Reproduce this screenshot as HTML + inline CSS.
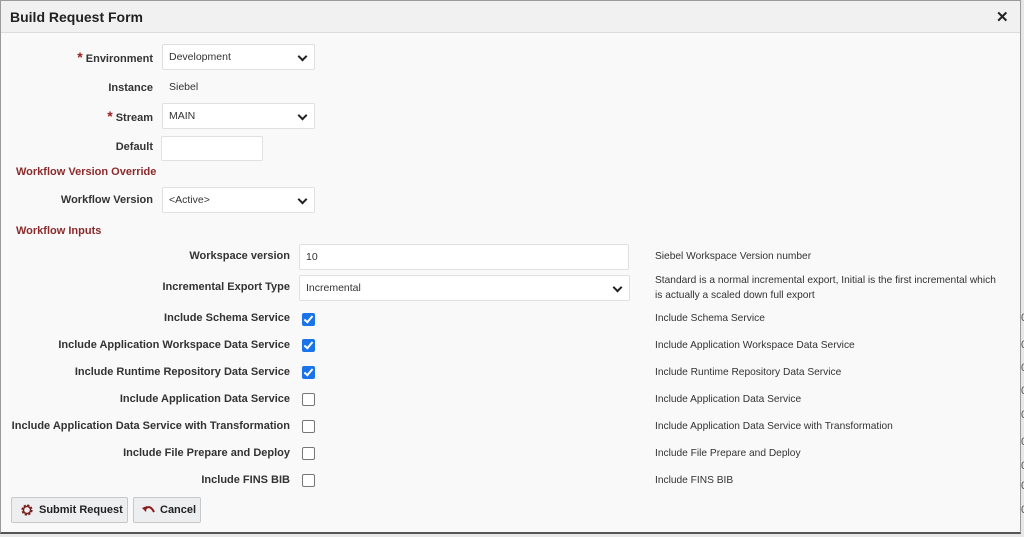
<!DOCTYPE html>
<html><head><meta charset="utf-8"><style>
*{margin:0;padding:0;box-sizing:border-box}
body{width:1024px;height:537px;background:#e8e8e8;position:relative;overflow:hidden;font-family:"Liberation Sans",Tahoma,sans-serif;font-size:11px;color:#333}
#dlg{position:absolute;left:0;top:0;width:1021px;height:534px;background:#f9f9f9;border:1px solid #9a9a9a;border-bottom:2px solid #555}
#hd{position:absolute;left:0;top:0;width:100%;height:32px;background:#f1f1f1;border-bottom:1px solid #dcdcdc}
#hd b{position:absolute;left:9px;top:8px;font-size:14px;color:#222}
#x{position:absolute;left:995px;top:7px;font-size:15px;font-weight:bold;color:#222}
.a{position:absolute;white-space:nowrap}
.l{font-weight:bold;color:#333;text-align:right}
.s{color:#8b2a2a;font-weight:bold}
.star{color:#9b1c1c;font-size:14px}
.sel,.inp{position:absolute;background:#fff;border:1px solid #e0e0e0;border-radius:2px;padding-left:6px;display:flex;align-items:center;color:#333;font-size:10.5px}
.sel:after{content:"";position:absolute;right:8px;top:8px;width:5px;height:5px;border-right:2px solid #222;border-bottom:2px solid #222;transform:rotate(45deg)}
.cb{position:absolute;width:13px;height:13px;border:1px solid #777;border-radius:2px;background:#fff}
.cb.on{background:#1a73e8;border-color:#1a73e8}
.cb.on:after{content:"";position:absolute;left:3px;top:0px;width:3px;height:7px;border-right:2px solid #fff;border-bottom:2px solid #fff;transform:rotate(40deg)}
.d{color:#333;font-size:10.2px}
.btn{position:absolute;height:26px;border:1px solid #c8c8c8;border-radius:2px;background:#eceeef;font-weight:bold;line-height:24px;color:#222}
.edge{position:absolute;left:1021px;font-size:11px;color:#555}
</style></head><body>
<div id="dlg">
<div id="hd"><b>Build Request Form</b><span id="x">✕</span></div>

<div class="a l" style="right:867px;top:48px"><span class="star">*</span> Environment</div>
<div class="sel" style="left:161px;top:43px;width:153px;height:26px">Development</div>
<div class="a l" style="right:867px;top:81px">Instance</div>
<div class="a" style="left:168px;top:80px;font-size:10.5px">Siebel</div>
<div class="a l" style="right:867px;top:107px"><span class="star">*</span> Stream</div>
<div class="sel" style="left:161px;top:102px;width:153px;height:26px">MAIN</div>
<div class="a l" style="right:867px;top:140px">Default</div>
<div class="inp" style="left:160px;top:135px;width:102px;height:25px"></div>
<div class="a s" style="left:15px;top:165px">Workflow Version Override</div>
<div class="a l" style="right:867px;top:193px">Workflow Version</div>
<div class="sel" style="left:161px;top:186px;width:153px;height:26px">&lt;Active&gt;</div>
<div class="a s" style="left:15px;top:224px">Workflow Inputs</div>

<div class="a l" style="right:730px;top:249px">Workspace version</div>
<div class="inp" style="left:298px;top:243px;width:330px;height:26px">10</div>
<div class="a d" style="left:654px;top:250px">Siebel Workspace Version number</div>

<div class="a l" style="right:730px;top:280px">Incremental Export Type</div>
<div class="sel" style="left:298px;top:274px;width:331px;height:26px">Incremental</div>
<div class="a d" style="left:654px;top:274px">Standard is a normal incremental export, Initial is the first incremental which</div>
<div class="a d" style="left:654px;top:289px">is actually a scaled down full export</div>

<div class="a l" style="right:730px;top:311px">Include Schema Service</div>
<div class="cb on" style="left:301px;top:312px"></div>
<div class="a d" style="left:654px;top:312px">Include Schema Service</div>

<div class="a l" style="right:730px;top:338px">Include Application Workspace Data Service</div>
<div class="cb on" style="left:301px;top:338px"></div>
<div class="a d" style="left:654px;top:339px">Include Application Workspace Data Service</div>

<div class="a l" style="right:730px;top:365px">Include Runtime Repository Data Service</div>
<div class="cb on" style="left:301px;top:365px"></div>
<div class="a d" style="left:654px;top:366px">Include Runtime Repository Data Service</div>

<div class="a l" style="right:730px;top:392px">Include Application Data Service</div>
<div class="cb" style="left:301px;top:392px"></div>
<div class="a d" style="left:654px;top:393px">Include Application Data Service</div>

<div class="a l" style="right:730px;top:419px">Include Application Data Service with Transformation</div>
<div class="cb" style="left:301px;top:419px"></div>
<div class="a d" style="left:654px;top:420px">Include Application Data Service with Transformation</div>

<div class="a l" style="right:730px;top:446px">Include File Prepare and Deploy</div>
<div class="cb" style="left:301px;top:446px"></div>
<div class="a d" style="left:654px;top:447px">Include File Prepare and Deploy</div>

<div class="a l" style="right:730px;top:473px">Include FINS BIB</div>
<div class="cb" style="left:301px;top:473px"></div>
<div class="a d" style="left:654px;top:474px">Include FINS BIB</div>

<div class="btn" style="left:10px;top:496px;width:117px;padding-left:27px">
<svg style="position:absolute;left:8px;top:5px" width="14" height="14" viewBox="0 0 14 14"><circle cx="7" cy="7" r="4.3" fill="none" stroke="#7a1e1e" stroke-width="2.6" stroke-dasharray="2 1.4"/><circle cx="7" cy="7" r="3.6" fill="none" stroke="#7a1e1e" stroke-width="1.5"/></svg>Submit Request</div>
<div class="btn" style="left:132px;top:496px;width:68px;padding-left:26px">
<svg style="position:absolute;left:8px;top:6px" width="14" height="12" viewBox="0 0 14 12"><path d="M3 5 Q8 0 12 8" fill="none" stroke="#8b1a1a" stroke-width="2"/><path d="M0 4 L5 2 L4 8 Z" fill="#8b1a1a"/></svg>Cancel</div>
</div>
<div class="edge" style="top:312px">0</div><div class="edge" style="top:339px">0</div><div class="edge" style="top:362px">0</div><div class="edge" style="top:385px">0</div><div class="edge" style="top:409px">0</div><div class="edge" style="top:436px">0</div><div class="edge" style="top:460px">0</div><div class="edge" style="top:480px">0</div><div class="edge" style="top:504px">0</div>
</body></html>
